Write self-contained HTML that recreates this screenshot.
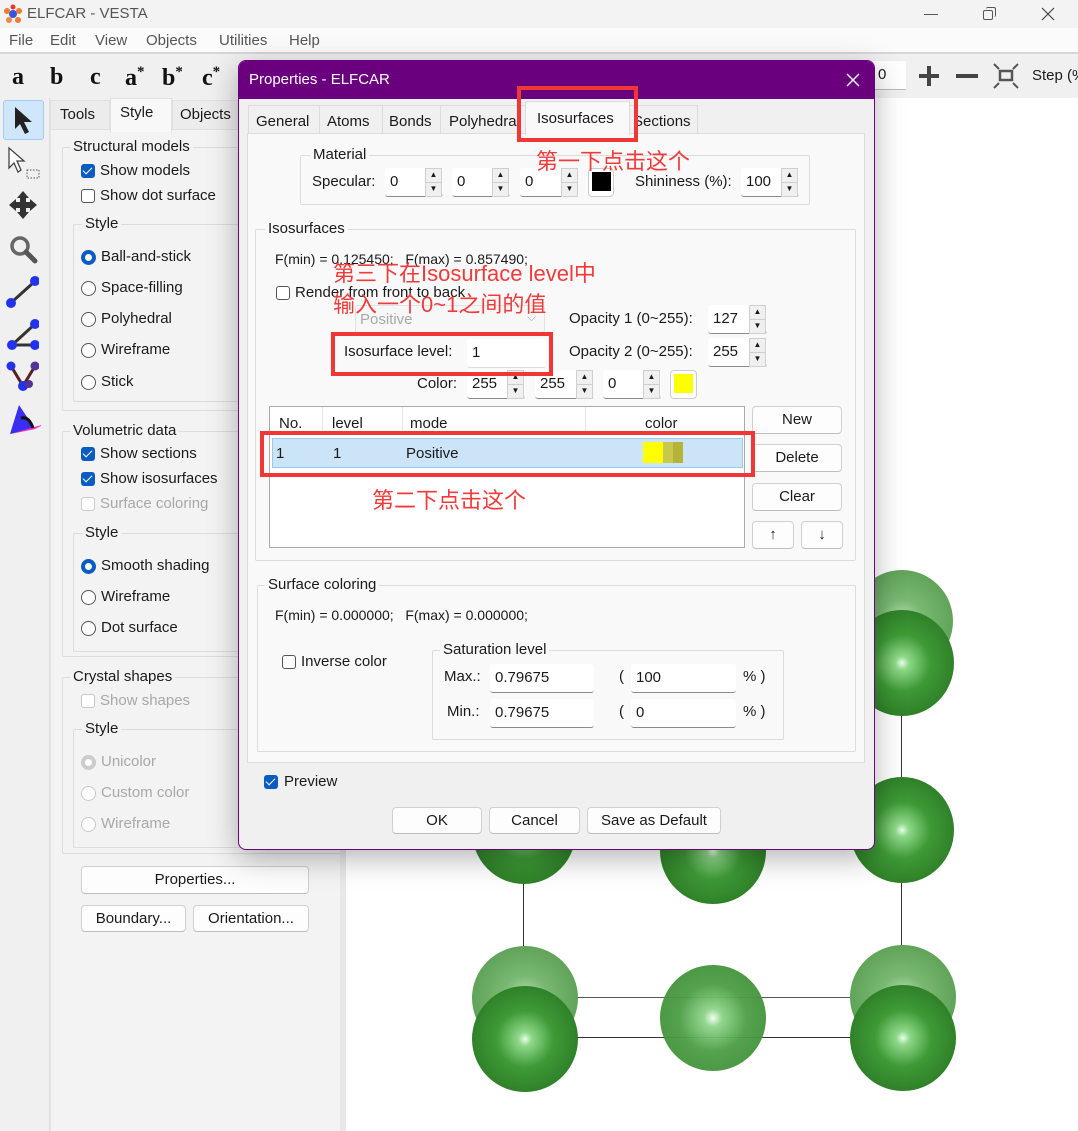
<!DOCTYPE html>
<html><head><meta charset="utf-8"><style>
*{box-sizing:border-box;margin:0;padding:0}
body{width:1078px;height:1131px;position:relative;overflow:hidden;background:#f0f0f0;font-family:"Liberation Sans","Noto Sans CJK SC",sans-serif;font-size:15px;color:#1a1a1a}
.a{position:absolute;white-space:nowrap}
.t{position:absolute;white-space:nowrap;line-height:18px}
.g{position:absolute;border:1px solid #dcdcdc;border-radius:2px}
.gl{position:absolute;background:inherit;padding:0 3px;line-height:18px;white-space:nowrap}
.cb{position:absolute;width:14px;height:14px;border:1px solid #555;border-radius:3px;background:#fff}
.cbk{position:absolute;width:14px;height:14px;border-radius:3px;background:#0a5cc2}
.cbk:after{content:"";position:absolute;left:4px;top:1px;width:4px;height:8px;border:solid #fff;border-width:0 1.5px 1.5px 0;transform:rotate(45deg)}
.rd{position:absolute;width:15px;height:15px;border:1px solid #555;border-radius:50%;background:#fff}
.rdk{position:absolute;width:15px;height:15px;border:4px solid #0a5cc2;border-radius:50%;background:#fff}
.dis{color:#a8a8a8}
.disb{border-color:#c8c8c8!important}
.btn{position:absolute;background:#fdfdfd;border:1px solid #d0d0d0;border-bottom-color:#bdbdbd;border-radius:4px;text-align:center;line-height:25px}
.in{position:absolute;background:#fff;border-bottom:1px solid #8a8a8a;border-radius:3px;padding-left:5px;line-height:27px}
.sp{position:absolute;width:17px;background:#f0f0f0;border:1px solid #cfcfcf}
.sp i{display:block;height:50%;border-bottom:1px solid #cfcfcf;font-style:normal;font-size:8px;text-align:center;line-height:12px}
.sp i:last-child{border:0}
.red{position:absolute;border:4px solid #f13636}
.rt{position:absolute;color:#f23a3a;font-size:22px;white-space:nowrap;font-family:"Liberation Sans","Noto Sans CJK SC",sans-serif;line-height:26px}
.ball{position:absolute;border-radius:50%;background:radial-gradient(circle at 50% 50%,#eaffea 0,#8fd88a 9%,#3e9a36 38%,#2e7e27 75%,#1f5e1a 100%)}
.ballb{position:absolute;border-radius:50%;background:radial-gradient(circle at 50% 50%,#b9e0b5 0,#79b872 30%,#5a9e53 80%,#4a8a44 100%)}
</style></head><body>
<!-- title bar -->
<div class="a" style="left:0;top:0;width:1078px;height:28px;background:#f3f3f3"></div>
<svg class="a" style="left:3px;top:4px" width="20" height="20"><circle cx="10" cy="10" r="4" fill="#3556d8"/><circle cx="4" cy="7" r="3" fill="#f07a30"/><circle cx="16" cy="7" r="3" fill="#f07a30"/><circle cx="10" cy="3" r="2.5" fill="#e33"/><circle cx="6" cy="16" r="3" fill="#e84"/><circle cx="15" cy="16" r="3" fill="#f07a30"/></svg>
<div class="t" style="left:27px;top:5px;color:#555">ELFCAR - VESTA</div>
<div class="a" style="left:924px;top:14px;width:14px;border-top:1px solid #555"></div>
<div class="a" style="left:983px;top:10px;width:10px;height:10px;border:1px solid #555;border-radius:2px"></div>
<div class="a" style="left:986px;top:7px;width:10px;height:10px;border-top:1px solid #555;border-right:1px solid #555;border-radius:2px"></div>
<svg class="a" style="left:1040px;top:6px" width="16" height="16"><path d="M2 2L14 14M14 2L2 14" stroke="#444" stroke-width="1.2"/></svg>
<!-- menu -->
<div class="a" style="left:0;top:28px;width:1078px;height:26px;background:#fbfbfb;border-bottom:2px solid #d6d6d6"></div>
<div class="t" style="left:9px;top:32px;color:#555">File</div>
<div class="t" style="left:50px;top:32px;color:#555">Edit</div>
<div class="t" style="left:95px;top:32px;color:#555">View</div>
<div class="t" style="left:146px;top:32px;color:#555">Objects</div>
<div class="t" style="left:219px;top:32px;color:#555">Utilities</div>
<div class="t" style="left:289px;top:32px;color:#555">Help</div>
<!-- toolbar -->
<div class="a" style="left:0;top:64px;font-family:'Liberation Serif',serif;font-weight:bold;font-size:24px;color:#111">
<span class="a" style="left:12px">a</span><span class="a" style="left:50px">b</span><span class="a" style="left:90px">c</span><span class="a" style="left:125px">a<sup style="font-size:15px">*</sup></span><span class="a" style="left:162px">b<sup style="font-size:15px">*</sup></span><span class="a" style="left:202px">c<sup style="font-size:15px">*</sup></span></div>
<div class="a" style="left:870px;top:61px;width:36px;height:29px;background:#fff;border-bottom:1px solid #bbb"></div>
<div class="t" style="left:878px;top:66px">0</div>
<svg class="a" style="left:916px;top:63px" width="26" height="26"><path d="M13 3V23M3 13H23" stroke="#444" stroke-width="4"/></svg>
<svg class="a" style="left:954px;top:63px" width="26" height="26"><path d="M2 13H24" stroke="#444" stroke-width="4"/></svg>
<svg class="a" style="left:991px;top:61px" width="30" height="30"><rect x="9" y="10" width="12" height="9" fill="none" stroke="#555" stroke-width="2.5"/><path d="M3 3l5 5M27 3l-5 5M3 27l5-5M27 27l-5-5" stroke="#555" stroke-width="2"/></svg>
<div class="t" style="left:1032px;top:67px">Step (%</div>
<!-- left icons column -->
<div class="a" style="left:0;top:98px;width:50px;height:1033px;background:#f0f0f0;border-right:1px solid #dedede"></div>
<div class="a" style="left:3px;top:100px;width:41px;height:40px;background:#cfe6fb;border:1px solid #9fcdf5;border-radius:3px"></div>
<svg class="a" style="left:10px;top:104px" width="28" height="32"><path d="M5 3L5 25L10 20L15 30L19 28L14 18L22 18Z" fill="#222"/></svg>
<svg class="a" style="left:6px;top:146px" width="34" height="34"><path d="M3 2L3 22L8 17L12 26L15 24L11 15L18 15Z" fill="#fff" stroke="#444" stroke-width="1.3"/><rect x="21" y="24" width="12" height="8" fill="none" stroke="#555" stroke-dasharray="1.5 1.5"/></svg>
<svg class="a" style="left:8px;top:190px" width="30" height="30"><path d="M15 1L21 8H18V12H22V9L29 15L22 21V18H18V22H21L15 29L9 22H12V18H8V21L1 15L8 9V12H12V8H9Z" fill="#333"/></svg>
<svg class="a" style="left:8px;top:234px" width="30" height="30"><circle cx="12" cy="12" r="8" fill="none" stroke="#666" stroke-width="3.5"/><path d="M18 18L27 27" stroke="#555" stroke-width="5" stroke-linecap="round"/></svg>
<svg class="a" style="left:5px;top:275px" width="34" height="34"><path d="M8 26L28 8" stroke="#333" stroke-width="3"/><circle cx="30" cy="6" r="5" fill="#2233ee"/><circle cx="6" cy="28" r="5" fill="#2233ee"/></svg>
<svg class="a" style="left:5px;top:317px" width="34" height="34"><path d="M7 28L30 7M7 28H30" stroke="#333" stroke-width="3"/><circle cx="30" cy="7" r="5" fill="#2233ee"/><circle cx="7" cy="28" r="5" fill="#2233ee"/><circle cx="30" cy="28" r="5" fill="#2233ee"/></svg>
<svg class="a" style="left:5px;top:360px" width="34" height="34"><path d="M6 6L18 26L30 6" stroke="#522" stroke-width="3" fill="none"/><circle cx="6" cy="6" r="4.5" fill="#2233ee"/><circle cx="30" cy="6" r="4.5" fill="#53329a"/><circle cx="18" cy="26" r="5" fill="#2233ee"/><circle cx="24" cy="24" r="4" fill="#53329a"/></svg>
<svg class="a" style="left:5px;top:402px" width="36" height="34"><path d="M14 3L5 32L30 27Z" fill="#3a2ef0"/><path d="M5 32L40 22L30 27Z" fill="#ff2fbd"/><path d="M16 16Q24 14 28 26" stroke="#111" stroke-width="3" fill="none"/></svg>
<!-- left panel -->
<div class="a" style="left:50px;top:130px;width:290px;height:1001px;background:#f3f3f3;border-left:1px solid #e5e5e5"></div>
<div class="a" style="left:50px;top:100px;width:60px;height:30px;background:#ececec;border:1px solid #e0e0e0"></div>
<div class="t" style="left:60px;top:106px">Tools</div>
<div class="a" style="left:110px;top:98px;width:62px;height:34px;background:#f8f8f8;border:1px solid #e0e0e0;border-bottom:0"></div>
<div class="t" style="left:120px;top:104px">Style</div>
<div class="a" style="left:172px;top:100px;width:70px;height:30px;background:#ececec;border:1px solid #e0e0e0"></div>
<div class="t" style="left:180px;top:106px">Objects</div>
<div class="g" style="left:62px;top:147px;width:280px;height:264px"></div>
<div class="gl" style="left:70px;top:138px;background:#f3f3f3">Structural models</div>
<div class="cbk" style="left:81px;top:164px"></div><div class="t" style="left:100px;top:162px">Show models</div>
<div class="cb" style="left:81px;top:189px"></div><div class="t" style="left:100px;top:187px">Show dot surface</div>
<div class="g" style="left:73px;top:224px;width:270px;height:178px"></div>
<div class="gl" style="left:82px;top:215px;background:#f3f3f3">Style</div>
<div class="rdk" style="left:81px;top:250px"></div><div class="t" style="left:101px;top:248px">Ball-and-stick</div>
<div class="rd" style="left:81px;top:281px"></div><div class="t" style="left:101px;top:279px">Space-filling</div>
<div class="rd" style="left:81px;top:312px"></div><div class="t" style="left:101px;top:310px">Polyhedral</div>
<div class="rd" style="left:81px;top:343px"></div><div class="t" style="left:101px;top:341px">Wireframe</div>
<div class="rd" style="left:81px;top:375px"></div><div class="t" style="left:101px;top:373px">Stick</div>
<div class="g" style="left:62px;top:431px;width:280px;height:226px"></div>
<div class="gl" style="left:70px;top:422px;background:#f3f3f3">Volumetric data</div>
<div class="cbk" style="left:81px;top:447px"></div><div class="t" style="left:100px;top:445px">Show sections</div>
<div class="cbk" style="left:81px;top:472px"></div><div class="t" style="left:100px;top:470px">Show isosurfaces</div>
<div class="cb disb" style="left:81px;top:497px"></div><div class="t dis" style="left:100px;top:495px">Surface coloring</div>
<div class="g" style="left:73px;top:533px;width:270px;height:119px"></div>
<div class="gl" style="left:82px;top:524px;background:#f3f3f3">Style</div>
<div class="rdk" style="left:81px;top:559px"></div><div class="t" style="left:101px;top:557px">Smooth shading</div>
<div class="rd" style="left:81px;top:590px"></div><div class="t" style="left:101px;top:588px">Wireframe</div>
<div class="rd" style="left:81px;top:621px"></div><div class="t" style="left:101px;top:619px">Dot surface</div>
<div class="g" style="left:62px;top:677px;width:280px;height:177px"></div>
<div class="gl" style="left:70px;top:668px;background:#f3f3f3">Crystal shapes</div>
<div class="cb disb" style="left:81px;top:694px"></div><div class="t dis" style="left:100px;top:692px">Show shapes</div>
<div class="g" style="left:73px;top:729px;width:270px;height:119px"></div>
<div class="gl" style="left:82px;top:720px;background:#f3f3f3">Style</div>
<div class="a" style="left:81px;top:755px;width:15px;height:15px;border:4px solid #ccc;border-radius:50%;background:#fff"></div><div class="t dis" style="left:101px;top:753px">Unicolor</div>
<div class="rd disb" style="left:81px;top:786px"></div><div class="t dis" style="left:101px;top:784px">Custom color</div>
<div class="rd disb" style="left:81px;top:817px"></div><div class="t dis" style="left:101px;top:815px">Wireframe</div>
<div class="btn" style="left:81px;top:866px;width:228px;height:28px">Properties...</div>
<div class="btn" style="left:81px;top:905px;width:105px;height:27px">Boundary...</div>
<div class="btn" style="left:193px;top:905px;width:116px;height:27px">Orientation...</div>
<!-- view area -->
<div class="a" style="left:340px;top:98px;width:6px;height:1033px;background:#e8e8e8"></div>
<div class="a" style="left:346px;top:98px;width:732px;height:1033px;background:#fff"></div>
<div class="a" style="left:523px;top:860px;width:1px;height:130px;background:#333"></div>
<div class="a" style="left:901px;top:700px;width:1px;height:290px;background:#333"></div>
<div class="a" style="left:576px;top:997px;width:276px;height:1px;background:#555"></div>
<div class="a" style="left:576px;top:1037px;width:276px;height:1px;background:#333"></div>
<div class="ballb" style="left:851px;top:570px;width:102px;height:102px"></div>
<div class="ball" style="left:850px;top:610px;width:104px;height:106px"></div>
<div class="ball" style="left:850px;top:777px;width:104px;height:106px"></div>
<div class="ball" style="left:472px;top:778px;width:104px;height:106px"></div>
<div class="ball" style="left:660px;top:798px;width:106px;height:106px"></div>
<div class="ballb" style="left:472px;top:946px;width:106px;height:104px"></div>
<div class="ballb" style="left:660px;top:965px;width:106px;height:106px;opacity:.95;background:radial-gradient(circle at 50% 50%,#f0fff0 0,#8ed489 12%,#4b9e44 45%,#3a8733 100%)"></div>
<div class="ballb" style="left:850px;top:945px;width:106px;height:104px"></div>
<div class="ball" style="left:472px;top:986px;width:106px;height:106px"></div>
<div class="ball" style="left:850px;top:985px;width:106px;height:106px"></div>
<!-- dialog -->
<div class="a" style="left:238px;top:60px;width:637px;height:790px;background:#f0f0f0;border:1px solid #6b0080;border-radius:8px;box-shadow:0 8px 30px rgba(0,0,0,.3);overflow:hidden">
<div class="a" style="left:0;top:0;width:637px;height:38px;background:#6b007e"></div>
</div>
<div class="t" style="left:249px;top:71px;color:#fff">Properties - ELFCAR</div>
<svg class="a" style="left:845px;top:72px" width="16" height="16"><path d="M2 2L14 14M14 2L2 14" stroke="#fff" stroke-width="1.4"/></svg>
<!-- tabs -->
<div class="a" style="left:247px;top:133px;width:618px;height:630px;background:#f9f9f9;border:1px solid #dcdcdc"></div>
<div class="a" style="left:248px;top:105px;width:72px;height:29px;background:#f0f0f0;border:1px solid #dcdcdc"></div><div class="t" style="left:256px;top:113px">General</div>
<div class="a" style="left:319px;top:105px;width:64px;height:29px;background:#f0f0f0;border:1px solid #dcdcdc"></div><div class="t" style="left:327px;top:113px">Atoms</div>
<div class="a" style="left:382px;top:105px;width:59px;height:29px;background:#f0f0f0;border:1px solid #dcdcdc"></div><div class="t" style="left:389px;top:113px">Bonds</div>
<div class="a" style="left:440px;top:105px;width:86px;height:29px;background:#f0f0f0;border:1px solid #dcdcdc;overflow:hidden"></div><div class="t" style="left:449px;top:113px;width:73px;overflow:hidden">Polyhedra</div>
<div class="a" style="left:627px;top:105px;width:71px;height:29px;background:#f0f0f0;border:1px solid #dcdcdc"></div><div class="t" style="left:633px;top:113px">Sections</div>
<div class="a" style="left:525px;top:101px;width:105px;height:34px;background:#f9f9f9;border:1px solid #dcdcdc;border-bottom:0"></div><div class="t" style="left:537px;top:110px">Isosurfaces</div>
<!-- material -->
<div class="g" style="left:300px;top:155px;width:510px;height:50px"></div>
<div class="gl" style="left:310px;top:146px;background:#f9f9f9">Material</div>
<div class="t" style="left:312px;top:173px">Specular:</div>
<div class="in" style="left:385px;top:168px;width:58px;height:29px">0</div><div class="sp" style="left:425px;top:168px;height:29px"><i>▲</i><i>▼</i></div>
<div class="in" style="left:452px;top:168px;width:58px;height:29px">0</div><div class="sp" style="left:492px;top:168px;height:29px"><i>▲</i><i>▼</i></div>
<div class="in" style="left:520px;top:168px;width:58px;height:29px">0</div><div class="sp" style="left:561px;top:168px;height:29px"><i>▲</i><i>▼</i></div>
<div class="a" style="left:588px;top:168px;width:26px;height:29px;border:1px solid #ccc;border-radius:4px;background:#fff"></div><div class="a" style="left:592px;top:172px;width:19px;height:19px;background:#000"></div>
<div class="t" style="left:635px;top:173px">Shininess (%):</div>
<div class="in" style="left:741px;top:168px;width:58px;height:29px">100</div><div class="sp" style="left:781px;top:168px;height:29px"><i>▲</i><i>▼</i></div>
<!-- isosurfaces group -->
<div class="g" style="left:255px;top:229px;width:601px;height:332px"></div>
<div class="gl" style="left:265px;top:220px;background:#f9f9f9">Isosurfaces</div>
<div class="t" style="left:275px;top:250px;font-size:14px">F(min) = 0.125450;&nbsp;&nbsp;&nbsp;F(max) = 0.857490;</div>
<div class="cb" style="left:276px;top:286px"></div><div class="t" style="left:295px;top:284px">Render from front to back</div>
<div class="a" style="left:355px;top:305px;width:190px;height:28px;border:1px solid #e2e2e2;border-radius:3px;background:#f7f7f7"></div>
<div class="t dis" style="left:360px;top:311px">Positive</div><div class="t dis" style="left:527px;top:308px;font-size:12px">⌵</div>
<div class="t" style="left:344px;top:343px">Isosurface level:</div>
<div class="in" style="left:467px;top:339px;width:79px;height:29px;border-bottom-color:#ddd">1</div>
<div class="t" style="left:569px;top:310px">Opacity 1 (0~255):</div>
<div class="in" style="left:708px;top:305px;width:59px;height:29px">127</div><div class="sp" style="left:749px;top:305px;height:29px"><i>▲</i><i>▼</i></div>
<div class="t" style="left:569px;top:343px">Opacity 2 (0~255):</div>
<div class="in" style="left:708px;top:338px;width:59px;height:29px">255</div><div class="sp" style="left:749px;top:338px;height:29px"><i>▲</i><i>▼</i></div>
<div class="t" style="left:417px;top:375px">Color:</div>
<div class="in" style="left:467px;top:370px;width:58px;height:29px">255</div><div class="sp" style="left:507px;top:370px;height:29px"><i>▲</i><i>▼</i></div>
<div class="in" style="left:535px;top:370px;width:58px;height:29px">255</div><div class="sp" style="left:576px;top:370px;height:29px"><i>▲</i><i>▼</i></div>
<div class="in" style="left:603px;top:370px;width:58px;height:29px">0</div><div class="sp" style="left:643px;top:370px;height:29px"><i>▲</i><i>▼</i></div>
<div class="a" style="left:670px;top:370px;width:27px;height:29px;border:1px solid #ccc;border-radius:4px;background:#fff"></div><div class="a" style="left:674px;top:374px;width:19px;height:19px;background:#ff0"></div>
<!-- table -->
<div class="a" style="left:269px;top:406px;width:476px;height:142px;background:#fff;border:1px solid #aaa"></div>
<div class="a" style="left:322px;top:407px;width:1px;height:28px;background:#e5e5e5"></div>
<div class="a" style="left:402px;top:407px;width:1px;height:28px;background:#e5e5e5"></div>
<div class="a" style="left:585px;top:407px;width:1px;height:28px;background:#e5e5e5"></div>
<div class="t" style="left:279px;top:415px">No.</div><div class="t" style="left:332px;top:415px">level</div><div class="t" style="left:410px;top:415px">mode</div><div class="t" style="left:645px;top:415px">color</div>
<div class="a" style="left:272px;top:438px;width:471px;height:30px;background:#cce4f7;border:1px solid #99c9ef"></div>
<div class="t" style="left:276px;top:445px">1</div><div class="t" style="left:333px;top:445px">1</div><div class="t" style="left:406px;top:445px">Positive</div>
<div class="a" style="left:643px;top:442px;width:20px;height:21px;background:#ff0"></div>
<div class="a" style="left:663px;top:442px;width:20px;height:21px;background:linear-gradient(90deg,#c8c84a 50%,#b4b43a 50%)"></div>
<div class="btn" style="left:752px;top:406px;width:90px;height:28px">New</div>
<div class="btn" style="left:752px;top:444px;width:90px;height:28px">Delete</div>
<div class="btn" style="left:752px;top:483px;width:90px;height:28px">Clear</div>
<div class="btn" style="left:752px;top:521px;width:42px;height:28px">↑</div>
<div class="btn" style="left:801px;top:521px;width:42px;height:28px">↓</div>
<!-- surface coloring -->
<div class="g" style="left:257px;top:585px;width:599px;height:167px"></div>
<div class="gl" style="left:265px;top:576px;background:#f9f9f9">Surface coloring</div>
<div class="t" style="left:275px;top:606px;font-size:14px">F(min) = 0.000000;&nbsp;&nbsp;&nbsp;F(max) = 0.000000;</div>
<div class="cb" style="left:282px;top:655px"></div><div class="t" style="left:301px;top:653px">Inverse color</div>
<div class="g" style="left:432px;top:650px;width:352px;height:90px"></div>
<div class="gl" style="left:440px;top:641px;background:#f9f9f9">Saturation level</div>
<div class="t" style="left:444px;top:668px">Max.:</div>
<div class="in" style="left:490px;top:664px;width:104px;height:29px">0.79675</div>
<div class="t" style="left:619px;top:668px">(</div>
<div class="in" style="left:631px;top:664px;width:105px;height:29px">100</div>
<div class="t" style="left:743px;top:668px">% )</div>
<div class="t" style="left:447px;top:703px">Min.:</div>
<div class="in" style="left:490px;top:699px;width:104px;height:29px">0.79675</div>
<div class="t" style="left:619px;top:703px">(</div>
<div class="in" style="left:631px;top:699px;width:105px;height:29px">0</div>
<div class="t" style="left:743px;top:703px">% )</div>
<!-- bottom -->
<div class="cbk" style="left:264px;top:775px"></div><div class="t" style="left:284px;top:773px">Preview</div>
<div class="btn" style="left:392px;top:807px;width:90px;height:27px">OK</div>
<div class="btn" style="left:489px;top:807px;width:91px;height:27px">Cancel</div>
<div class="btn" style="left:587px;top:807px;width:134px;height:27px">Save as Default</div>
<!-- annotations -->
<div class="red" style="left:517px;top:86px;width:121px;height:56px"></div>
<div class="rt" style="left:536px;top:149px">第一下点击这个</div>
<div class="rt" style="left:333px;top:261px">第三下在Isosurface level中</div>
<div class="rt" style="left:333px;top:292px">输入一个0~1之间的值</div>
<div class="red" style="left:331px;top:332px;width:222px;height:44px"></div>
<div class="red" style="left:260px;top:431px;width:495px;height:46px"></div>
<div class="rt" style="left:372px;top:488px">第二下点击这个</div>
</body></html>
